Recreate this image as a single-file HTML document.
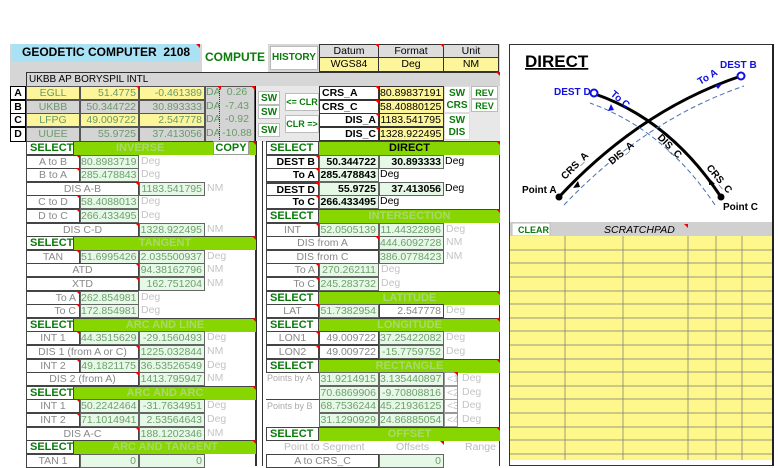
<!DOCTYPE html>
<html><head><meta charset="utf-8"><style>
*{box-sizing:border-box;margin:0;padding:0}
body{width:778px;height:466px;background:#fff;position:relative;overflow:hidden;font-family:"Liberation Sans",Arial,sans-serif;font-size:10.5px}
div{position:absolute;white-space:nowrap;overflow:hidden;line-height:13px}
.l{background:#fff;border:1px solid #444;color:#888;text-align:center}
.lr{background:#fff;border:1px solid #444;color:#888;text-align:right;padding-right:3px}
.v{background:#e6f8e6;border:1px solid #666;color:#6f9f6f;text-align:right;padding-right:2px}
.u{color:#c4c4c4;padding-left:2px}
.sel{background:#fff;border:1px solid #444;color:#0a7a0a;font-weight:bold;font-size:11px;padding-left:3px;line-height:12px}
.bar{background:#88d600;color:#a9d870;font-weight:bold;font-size:11px;text-align:center;border-top:1px solid #444;line-height:12px}
.t{width:0;height:0;border-top:4px solid #e00;border-left:4px solid transparent}
.btn{background:#fff;border:1px solid #bbb;color:#0a7a0a;font-weight:bold;font-size:10px;text-align:center}
.d{background:#fff;border:1px solid #444;color:#000;font-weight:bold;text-align:right;padding-right:3px}
.dv{background:#e6f8e6;border:1px solid #666;color:#000;font-weight:bold;text-align:right;padding-right:2px}
</style></head><body>
<!-- header -->
<div style="left:10px;top:44px;width:490px;height:98px;background:#d6d6d6"></div>
<div style="left:12px;top:44px;width:188px;height:18px;background:#a9e2f5;font-weight:bold;font-size:12px;line-height:17px;padding-left:10px">GEODETIC COMPUTER&nbsp; 2108</div>
<div class="t" style="left:196px;top:44px"></div>
<div style="left:202px;top:44px;width:66px;height:28px;background:#fff;color:#0a7a0a;font-weight:bold;font-size:12px;line-height:26px;text-align:center">COMPUTE</div>
<div style="left:270px;top:46px;width:48px;height:24px;background:#fff;border:1px solid #bbb;color:#0a7a0a;font-weight:bold;font-size:10px;line-height:22px;text-align:center">HISTORY</div>
<div style="left:319px;top:44px;width:180px;height:28px;border:1px solid #333;background:#ddd"></div>
<div style="left:319px;top:44px;width:60px;height:14px;border:1px solid #333;text-align:center;background:#ddd">Datum</div>
<div style="left:378px;top:44px;width:66px;height:14px;border:1px solid #333;text-align:center;background:#ddd">Format</div>
<div style="left:443px;top:44px;width:56px;height:14px;border:1px solid #333;text-align:center;background:#ddd">Unit</div>
<div style="left:319px;top:57px;width:60px;height:15px;border:1px solid #333;text-align:center;background:#fdf59a">WGS84</div>
<div style="left:378px;top:57px;width:66px;height:15px;border:1px solid #333;text-align:center;background:#fdf59a">Deg</div>
<div style="left:443px;top:57px;width:56px;height:15px;border:1px solid #333;text-align:center;background:#fdf59a">NM</div>
<div style="left:26px;top:72px;width:474px;height:14px;border-top:1px solid #333;border-left:1px solid #333;padding-left:2px;font-size:10px">UKBB AP BORYSPIL INTL</div>
<!-- ABCD -->
<div style="left:10px;top:86px;width:246px;height:56px;border:1px solid #000"></div>
<div style="left:10px;top:86px;width:16px;height:14px;background:#fff;border:1px solid #000;font-weight:bold;text-align:center">A</div>
<div style="left:10px;top:100px;width:16px;height:14px;background:#fff;border:1px solid #000;font-weight:bold;text-align:center">B</div>
<div style="left:10px;top:113px;width:16px;height:14px;background:#fff;border:1px solid #000;font-weight:bold;text-align:center">C</div>
<div style="left:10px;top:127px;width:16px;height:15px;background:#fff;border:1px solid #000;font-weight:bold;text-align:center">D</div>

<div style="left:26px;top:86px;width:54px;height:14px;background:#fdf59a;border:1px solid #555;color:#6a9a6a;text-align:center">EGLL</div>
<div style="left:80px;top:86px;width:59px;height:14px;background:#fdf59a;border:1px solid #555;color:#6a9a6a;text-align:right;padding-right:2px">51.4775</div>
<div style="left:139px;top:86px;width:66px;height:14px;background:#fdf59a;border:1px solid #555;color:#6a9a6a;text-align:right;padding-right:2px">-0.461389</div>
<div style="left:26px;top:100px;width:54px;height:14px;background:#d4d4d4;border:1px solid #555;color:#6a9a6a;text-align:center">UKBB</div>
<div style="left:80px;top:100px;width:59px;height:14px;background:#d4d4d4;border:1px solid #555;color:#6a9a6a;text-align:right;padding-right:2px">50.344722</div>
<div style="left:139px;top:100px;width:66px;height:14px;background:#d4d4d4;border:1px solid #555;color:#6a9a6a;text-align:right;padding-right:2px">30.893333</div>
<div style="left:26px;top:113px;width:54px;height:14px;background:#fdf59a;border:1px solid #555;color:#6a9a6a;text-align:center">LFPG</div>
<div style="left:80px;top:113px;width:59px;height:14px;background:#fdf59a;border:1px solid #555;color:#6a9a6a;text-align:right;padding-right:2px">49.009722</div>
<div style="left:139px;top:113px;width:66px;height:14px;background:#fdf59a;border:1px solid #555;color:#6a9a6a;text-align:right;padding-right:2px">2.547778</div>
<div style="left:26px;top:127px;width:54px;height:15px;background:#d4d4d4;border:1px solid #555;color:#6a9a6a;text-align:center">UUEE</div>
<div style="left:80px;top:127px;width:59px;height:15px;background:#d4d4d4;border:1px solid #555;color:#6a9a6a;text-align:right;padding-right:2px">55.9725</div>
<div style="left:139px;top:127px;width:66px;height:15px;background:#d4d4d4;border:1px solid #555;color:#6a9a6a;text-align:right;padding-right:2px">37.413056</div>
<div style="left:205px;top:86px;width:50px;height:56px;background:#d4d4d4;color:#6a9a6a;border:1px solid #555"></div>
<div style="left:206px;top:86px;width:14px;height:14px;color:#6a9a6a">DA:</div><div style="left:220px;top:86px;width:34px;height:14px;color:#6a9a6a;text-align:center">0.26</div>
<div style="left:206px;top:100px;width:14px;height:14px;color:#6a9a6a">DA:</div><div style="left:220px;top:100px;width:34px;height:14px;color:#6a9a6a;text-align:center">-7.43</div>
<div style="left:206px;top:113px;width:14px;height:14px;color:#6a9a6a">DA:</div><div style="left:220px;top:113px;width:34px;height:14px;color:#6a9a6a;text-align:center">-0.92</div>
<div style="left:206px;top:127px;width:14px;height:14px;color:#6a9a6a">DA:</div><div style="left:220px;top:127px;width:34px;height:14px;color:#6a9a6a;text-align:center">-10.88</div>
<div style="left:219px;top:86px;width:0;height:56px;border-left:1px dotted #333"></div>
<div class="t" style="left:136px;top:86px"></div><div class="t" style="left:217px;top:86px"></div><div class="t" style="left:251px;top:86px"></div>

<!-- SW / CLR -->
<div style="left:256px;top:86px;width:244px;height:55px;background:#e8e8e8"></div>
<div class="btn" style="left:258px;top:91px;width:22px;height:14px">SW</div>
<div class="btn" style="left:258px;top:105px;width:22px;height:14px">SW</div>
<div class="btn" style="left:258px;top:123px;width:22px;height:14px">SW</div>
<div class="btn" style="left:285px;top:93px;width:34px;height:18px;line-height:16px;font-size:9px">&lt;= CLR</div>
<div class="btn" style="left:285px;top:115px;width:34px;height:18px;line-height:16px;font-size:9px">CLR =&gt;</div>
<div style="left:319px;top:86px;width:60px;height:14px;background:#fff;border:1px solid #333;font-weight:bold;padding-left:2px">CRS_A</div>
<div style="left:319px;top:100px;width:60px;height:14px;background:#fff;border:1px solid #333;font-weight:bold;padding-left:2px">CRS_C</div>
<div style="left:319px;top:113px;width:60px;height:14px;background:#fff;border:1px solid #333;font-weight:bold;text-align:right;padding-right:2px">DIS_A</div>
<div style="left:319px;top:127px;width:60px;height:14px;background:#fff;border:1px solid #333;font-weight:bold;text-align:right;padding-right:2px">DIS_C</div>
<div style="left:379px;top:86px;width:65px;height:14px;background:#fdf59a;border:1px solid #333;text-align:right;padding-right:2px">80.89837191</div>
<div style="left:379px;top:100px;width:65px;height:14px;background:#fdf59a;border:1px solid #333;text-align:right;padding-right:2px">58.40880125</div>
<div style="left:379px;top:113px;width:65px;height:14px;background:#fdf59a;border:1px solid #333;text-align:right;padding-right:2px">1183.541795</div>
<div style="left:379px;top:127px;width:65px;height:14px;background:#fdf59a;border:1px solid #333;text-align:right;padding-right:2px">1328.922495</div>
<div class="btn" style="left:444px;top:86px;width:26px;height:27px;line-height:12px;padding-top:1px;border-color:#ddd">SW<br>CRS</div>
<div class="btn" style="left:444px;top:113px;width:26px;height:27px;line-height:12px;padding-top:1px;border-color:#ddd">SW<br>DIS</div>
<div class="btn" style="left:471px;top:86px;width:27px;height:13px;font-size:9px;line-height:12px">REV</div>
<div class="btn" style="left:471px;top:99px;width:27px;height:13px;font-size:9px;line-height:12px">REV</div>

<!-- left panel -->
<div style="left:26px;top:141px;width:230px;height:325px;border-left:1px solid #333;border-right:1px solid #333"></div>
<div class="sel" style="left:26px;top:141px;width:48px;height:14px">SELECT</div>
<div class="bar" style="left:74px;top:141px;width:182px;height:14px;text-align:left;padding-left:42px">INVERSE</div>
<div class="btn" style="left:213px;top:141px;width:36px;height:14px;font-size:11px;line-height:12px;border-color:#999">COPY</div>
<div class="l" style="left:26px;top:155px;width:54px;height:14px">A to B</div><div class="v" style="left:80px;top:155px;width:59px;height:14px">80.8983719</div><div class="u" style="left:139px;top:155px;width:40px;height:14px">Deg</div>
<div class="l" style="left:26px;top:168px;width:54px;height:14px">B to A</div><div class="v" style="left:80px;top:168px;width:59px;height:14px">285.478843</div><div class="u" style="left:139px;top:168px;width:40px;height:14px">Deg</div>
<div class="l" style="left:26px;top:182px;width:113px;height:14px">DIS A-B</div><div class="v" style="left:139px;top:182px;width:66px;height:14px">1183.541795</div><div class="u" style="left:205px;top:182px;width:40px;height:14px">NM</div>
<div class="l" style="left:26px;top:195px;width:54px;height:14px">C to D</div><div class="v" style="left:80px;top:195px;width:59px;height:14px">58.4088013</div><div class="u" style="left:139px;top:195px;width:40px;height:14px">Deg</div>
<div class="l" style="left:26px;top:209px;width:54px;height:14px">D to C</div><div class="v" style="left:80px;top:209px;width:59px;height:14px">266.433495</div><div class="u" style="left:139px;top:209px;width:40px;height:14px">Deg</div>
<div class="l" style="left:26px;top:223px;width:113px;height:14px">DIS C-D</div><div class="v" style="left:139px;top:223px;width:66px;height:14px">1328.922495</div><div class="u" style="left:205px;top:223px;width:40px;height:14px">NM</div>
<div class="sel" style="left:26px;top:236px;width:48px;height:14px">SELECT</div><div class="bar" style="left:74px;top:236px;width:182px;height:14px">TANGENT</div>
<div class="l" style="left:26px;top:250px;width:54px;height:14px">TAN</div><div class="v" style="left:80px;top:250px;width:59px;height:14px">51.6995426</div><div class="v" style="left:139px;top:250px;width:66px;height:14px">2.035500937</div><div class="u" style="left:205px;top:250px;width:40px;height:14px">Deg</div>
<div class="l" style="left:26px;top:263px;width:113px;height:14px">ATD</div><div class="v" style="left:139px;top:263px;width:66px;height:14px">94.38162796</div><div class="u" style="left:205px;top:263px;width:40px;height:14px">NM</div>
<div class="l" style="left:26px;top:277px;width:113px;height:14px">XTD</div><div class="v" style="left:139px;top:277px;width:66px;height:14px">162.751204</div><div class="u" style="left:205px;top:277px;width:40px;height:14px">NM</div>
<div class="lr" style="left:26px;top:291px;width:54px;height:14px">To A</div><div class="v" style="left:80px;top:291px;width:59px;height:14px">262.854981</div><div class="u" style="left:139px;top:291px;width:40px;height:14px">Deg</div>
<div class="lr" style="left:26px;top:304px;width:54px;height:14px">To C</div><div class="v" style="left:80px;top:304px;width:59px;height:14px">172.854981</div><div class="u" style="left:139px;top:304px;width:40px;height:14px">Deg</div>
<div class="sel" style="left:26px;top:318px;width:48px;height:14px">SELECT</div><div class="bar" style="left:74px;top:318px;width:182px;height:14px">ARC AND LINE</div>
<div class="l" style="left:26px;top:331px;width:54px;height:14px">INT 1</div><div class="v" style="left:80px;top:331px;width:59px;height:14px">44.3515629</div><div class="v" style="left:139px;top:331px;width:66px;height:14px">-29.1560493</div><div class="u" style="left:205px;top:331px;width:40px;height:14px">Deg</div>
<div class="l" style="left:26px;top:345px;width:113px;height:14px">DIS 1 (from A or C)</div><div class="v" style="left:139px;top:345px;width:66px;height:14px">1225.032844</div><div class="u" style="left:205px;top:345px;width:40px;height:14px">NM</div>
<div class="l" style="left:26px;top:359px;width:54px;height:14px">INT 2</div><div class="v" style="left:80px;top:359px;width:59px;height:14px">49.1821175</div><div class="v" style="left:139px;top:359px;width:66px;height:14px">36.53526549</div><div class="u" style="left:205px;top:359px;width:40px;height:14px">Deg</div>
<div class="l" style="left:26px;top:372px;width:113px;height:14px">DIS 2 (from A)</div><div class="v" style="left:139px;top:372px;width:66px;height:14px">1413.795947</div><div class="u" style="left:205px;top:372px;width:40px;height:14px">NM</div>
<div class="sel" style="left:26px;top:386px;width:48px;height:14px">SELECT</div><div class="bar" style="left:74px;top:386px;width:182px;height:14px">ARC AND ARC</div>
<div class="l" style="left:26px;top:399px;width:54px;height:14px">INT 1</div><div class="v" style="left:80px;top:399px;width:59px;height:14px">50.2242464</div><div class="v" style="left:139px;top:399px;width:66px;height:14px">-31.7634951</div><div class="u" style="left:205px;top:399px;width:40px;height:14px">Deg</div>
<div class="l" style="left:26px;top:413px;width:54px;height:14px">INT 2</div><div class="v" style="left:80px;top:413px;width:59px;height:14px">71.1014941</div><div class="v" style="left:139px;top:413px;width:66px;height:14px">2.53564643</div><div class="u" style="left:205px;top:413px;width:40px;height:14px">Deg</div>
<div class="l" style="left:26px;top:427px;width:113px;height:14px">DIS A-C</div><div class="v" style="left:139px;top:427px;width:66px;height:14px">188.1202346</div><div class="u" style="left:205px;top:427px;width:40px;height:14px">NM</div>
<div class="sel" style="left:26px;top:440px;width:48px;height:14px">SELECT</div><div class="bar" style="left:74px;top:440px;width:182px;height:14px">ARC AND TANGENT</div>
<div class="l" style="left:26px;top:454px;width:54px;height:14px">TAN 1</div><div class="v" style="left:80px;top:454px;width:59px;height:14px">0</div><div class="v" style="left:139px;top:454px;width:66px;height:14px">0</div>

<!-- right panel -->
<div style="left:256px;top:141px;width:7px;height:325px;border-left:1px solid #333;border-right:1px solid #333;background:#fff"></div>
<div style="left:263px;top:141px;width:237px;height:325px;border-right:1px solid #333"></div>
<div class="sel" style="left:266px;top:141px;width:53px;height:14px">SELECT</div><div class="bar" style="left:319px;top:141px;width:181px;height:14px;color:#000">DIRECT</div>
<div class="d" style="left:266px;top:155px;width:53px;height:14px">DEST B</div><div class="dv" style="left:319px;top:155px;width:60px;height:14px">50.344722</div><div class="dv" style="left:379px;top:155px;width:65px;height:14px">30.893333</div><div style="left:445px;top:155px;width:40px;height:14px">Deg</div>
<div class="d" style="left:266px;top:168px;width:53px;height:14px">To A</div><div class="dv" style="left:319px;top:168px;width:60px;height:14px">285.478843</div><div style="left:380px;top:168px;width:40px;height:14px">Deg</div>
<div class="d" style="left:266px;top:182px;width:53px;height:14px;border-top:2px solid #444">DEST D</div><div class="dv" style="left:319px;top:182px;width:60px;height:14px">55.9725</div><div class="dv" style="left:379px;top:182px;width:65px;height:14px">37.413056</div><div style="left:445px;top:182px;width:40px;height:14px">Deg</div>
<div class="d" style="left:266px;top:195px;width:53px;height:14px">To C</div><div class="dv" style="left:319px;top:195px;width:60px;height:14px">266.433495</div><div style="left:380px;top:195px;width:40px;height:14px">Deg</div>
<div class="sel" style="left:266px;top:209px;width:53px;height:14px">SELECT</div><div class="bar" style="left:319px;top:209px;width:181px;height:14px">INTERSECTION</div>
<div class="l" style="left:266px;top:223px;width:53px;height:14px">INT</div><div class="v" style="left:319px;top:223px;width:60px;height:14px">52.0505139</div><div class="v" style="left:379px;top:223px;width:65px;height:14px">11.44322896</div><div class="u" style="left:444px;top:223px;width:40px;height:14px">Deg</div>
<div class="l" style="left:266px;top:236px;width:113px;height:14px">DIS from A</div><div class="v" style="left:379px;top:236px;width:65px;height:14px">444.6092728</div><div class="u" style="left:444px;top:236px;width:40px;height:14px">NM</div>
<div class="l" style="left:266px;top:250px;width:113px;height:14px">DIS from C</div><div class="v" style="left:379px;top:250px;width:65px;height:14px">386.0778423</div><div class="u" style="left:444px;top:250px;width:40px;height:14px">NM</div>
<div class="lr" style="left:266px;top:263px;width:53px;height:14px">To A</div><div class="v" style="left:319px;top:263px;width:60px;height:14px">270.262111</div><div class="u" style="left:379px;top:263px;width:40px;height:14px">Deg</div>
<div class="lr" style="left:266px;top:277px;width:53px;height:14px">To C</div><div class="v" style="left:319px;top:277px;width:60px;height:14px">245.283732</div><div class="u" style="left:379px;top:277px;width:40px;height:14px">Deg</div>
<div class="sel" style="left:266px;top:291px;width:53px;height:14px">SELECT</div><div class="bar" style="left:319px;top:291px;width:181px;height:14px">LATITUDE</div>
<div class="l" style="left:266px;top:304px;width:53px;height:14px">LAT</div><div class="v" style="left:319px;top:304px;width:60px;height:14px">51.7382954</div><div class="lr" style="left:379px;top:304px;width:65px;height:14px;padding-right:2px">2.547778</div><div class="u" style="left:444px;top:304px;width:40px;height:14px">Deg</div>
<div class="sel" style="left:266px;top:318px;width:53px;height:14px">SELECT</div><div class="bar" style="left:319px;top:318px;width:181px;height:14px">LONGITUDE</div>
<div class="l" style="left:266px;top:331px;width:53px;height:14px">LON1</div><div class="lr" style="left:319px;top:331px;width:60px;height:14px;padding-right:2px">49.009722</div><div class="v" style="left:379px;top:331px;width:65px;height:14px">37.25422082</div><div class="u" style="left:444px;top:331px;width:40px;height:14px">Deg</div>
<div class="l" style="left:266px;top:345px;width:53px;height:14px">LON2</div><div class="lr" style="left:319px;top:345px;width:60px;height:14px;padding-right:2px">49.009722</div><div class="v" style="left:379px;top:345px;width:65px;height:14px">-15.7759752</div><div class="u" style="left:444px;top:345px;width:40px;height:14px">Deg</div>
<div class="sel" style="left:266px;top:359px;width:53px;height:14px">SELECT</div><div class="bar" style="left:319px;top:359px;width:181px;height:14px">RECTANGLE</div>
<div style="left:266px;top:372px;width:53px;height:27px;color:#aaa;font-size:9px;padding-left:1px">Points by A</div>
<div style="left:266px;top:399px;width:53px;height:28px;color:#aaa;font-size:9px;padding-left:1px;border-top:1px solid #444">Points by B</div>
<div class="v" style="left:319px;top:372px;width:60px;height:14px">31.9214915</div><div class="v" style="left:379px;top:372px;width:65px;height:14px">3.135440897</div><div class="u" style="left:444px;top:372px;width:14px;height:14px;border:1px solid #999">&lt;1</div><div class="u" style="left:460px;top:372px;width:30px;height:14px">Deg</div>
<div class="v" style="left:319px;top:386px;width:60px;height:14px">70.6869906</div><div class="v" style="left:379px;top:386px;width:65px;height:14px">-9.70808816</div><div class="u" style="left:444px;top:386px;width:14px;height:14px;border:1px solid #999">&lt;2</div><div class="u" style="left:460px;top:386px;width:30px;height:14px">Deg</div>
<div class="v" style="left:319px;top:399px;width:60px;height:14px">68.7536244</div><div class="v" style="left:379px;top:399px;width:65px;height:14px">45.21936125</div><div class="u" style="left:444px;top:399px;width:14px;height:14px;border:1px solid #999">&lt;3</div><div class="u" style="left:460px;top:399px;width:30px;height:14px">Deg</div>
<div class="v" style="left:319px;top:413px;width:60px;height:14px">31.1290929</div><div class="v" style="left:379px;top:413px;width:65px;height:14px">24.86885054</div><div class="u" style="left:444px;top:413px;width:14px;height:14px;border:1px solid #999">&lt;4</div><div class="u" style="left:460px;top:413px;width:30px;height:14px">Deg</div>
<div class="sel" style="left:266px;top:427px;width:53px;height:14px">SELECT</div><div class="bar" style="left:319px;top:427px;width:181px;height:14px">OFFSET</div>
<div style="left:266px;top:441px;width:234px;height:13px;color:#bbb"><span style="position:absolute;left:18px">Point to Segment</span><span style="position:absolute;left:130px">Offsets</span><span style="position:absolute;left:199px">Range</span></div>
<div class="l" style="left:266px;top:454px;width:113px;height:14px">A to CRS_C</div><div class="v" style="left:379px;top:454px;width:65px;height:14px">0</div>

<!-- red triangles -->
<div class="t" style="left:252px;top:141px"></div><div class="t" style="left:76px;top:155px"></div><div class="t" style="left:76px;top:168px"></div><div class="t" style="left:135px;top:182px"></div><div class="t" style="left:76px;top:195px"></div><div class="t" style="left:76px;top:209px"></div><div class="t" style="left:135px;top:223px"></div><div class="t" style="left:252px;top:236px"></div><div class="t" style="left:76px;top:250px"></div><div class="t" style="left:135px;top:263px"></div><div class="t" style="left:135px;top:277px"></div><div class="t" style="left:76px;top:291px"></div><div class="t" style="left:76px;top:304px"></div><div class="t" style="left:252px;top:318px"></div><div class="t" style="left:76px;top:331px"></div><div class="t" style="left:135px;top:345px"></div><div class="t" style="left:76px;top:359px"></div><div class="t" style="left:135px;top:372px"></div><div class="t" style="left:252px;top:386px"></div><div class="t" style="left:76px;top:399px"></div><div class="t" style="left:76px;top:413px"></div><div class="t" style="left:135px;top:427px"></div><div class="t" style="left:252px;top:440px"></div>
<div class="t" style="left:496px;top:141px"></div><div class="t" style="left:315px;top:155px"></div><div class="t" style="left:315px;top:168px"></div><div class="t" style="left:315px;top:182px"></div><div class="t" style="left:315px;top:195px"></div><div class="t" style="left:496px;top:209px"></div><div class="t" style="left:315px;top:223px"></div><div class="t" style="left:375px;top:236px"></div><div class="t" style="left:315px;top:263px"></div><div class="t" style="left:315px;top:277px"></div><div class="t" style="left:496px;top:291px"></div><div class="t" style="left:315px;top:304px"></div><div class="t" style="left:496px;top:318px"></div><div class="t" style="left:315px;top:331px"></div><div class="t" style="left:315px;top:345px"></div><div class="t" style="left:496px;top:359px"></div><div class="t" style="left:454px;top:372px"></div><div class="t" style="left:496px;top:427px"></div><div class="t" style="left:440px;top:441px"></div><div class="t" style="left:375px;top:86px"></div><div class="t" style="left:375px;top:100px"></div><div class="t" style="left:375px;top:113px"></div><div class="t" style="left:375px;top:127px"></div><div class="t" style="left:496px;top:72px"></div><div class="t" style="left:375px;top:44px"></div><div class="t" style="left:440px;top:44px"></div>

<!-- diagram -->
<div style="left:509px;top:44px;width:264px;height:422px;border:1px solid #333;background:#fff"></div>
<svg style="position:absolute;left:0;top:0" width="778" height="466">
<text x="525" y="67" font-family="Liberation Sans" font-weight="bold" font-size="17" text-decoration="underline">DIRECT</text>
<path d="M559,197 Q640,110 741,76" fill="none" stroke="#000" stroke-width="3"/>
<path d="M721,197 Q670,120 595,94" fill="none" stroke="#000" stroke-width="3"/>
<path d="M564,205 Q645,120 744,86" fill="none" stroke="#4a6fb0" stroke-width="1" stroke-dasharray="5,3"/>
<path d="M715,205 Q665,130 590,103" fill="none" stroke="#4a6fb0" stroke-width="1" stroke-dasharray="5,3"/>
<circle cx="559" cy="197" r="3.5"/><circle cx="721" cy="197" r="3.5"/>
<circle cx="741" cy="76" r="3.5" fill="#fff" stroke="#1010e0" stroke-width="2"/>
<circle cx="594" cy="93" r="3.5" fill="#fff" stroke="#1010e0" stroke-width="2"/>
<path d="M573,188 l5,-7 l2,6z M715,184 l-6,-6 l0,7z" fill="#000"/>
<path d="M722,84 l-7,1 l3,4z M611,104 l-3,7 l6,-1z" fill="#1010e0"/>
<g font-family="Liberation Sans" font-weight="bold" font-size="10">
<text x="522" y="193">Point A</text><text x="723" y="210">Point C</text>
<text x="720" y="68" fill="#1010e0">DEST B</text><text x="554" y="95" fill="#1010e0">DEST D</text>
<text x="700" y="85" fill="#1010e0" transform="rotate(-30 700 85)">To A</text>
<text x="610" y="95" fill="#1010e0" transform="rotate(40 610 95)">To C</text>
<text x="565" y="180" transform="rotate(-45 565 180)">CRS_A</text>
<text x="612" y="165" transform="rotate(-40 612 165)">DIS_A</text>
<text x="657" y="138" transform="rotate(45 657 138)">DIS_C</text>
<text x="706" y="168" transform="rotate(50 706 168)">CRS_C</text>
</g>
<rect x="510" y="222" width="262" height="14" fill="#d0d0d0"/>
<rect x="512" y="223" width="38" height="13" fill="#fff" stroke="#bbb"/>
<text x="518" y="233" font-family="Liberation Sans" font-weight="bold" font-size="9" fill="#0a7a0a">CLEAR</text>
<text x="604" y="233" font-family="Liberation Sans" font-style="italic" font-size="10.5">SCRATCHPAD</text>
<path d="M684,224 l4,0 l0,4z" fill="#e00"/>
<rect x="510" y="236" width="262" height="224" fill="#fdf78c"/>
<g stroke="#777" stroke-width="0.7">
<line x1="565" y1="236" x2="565" y2="460"/><line x1="623" y1="236" x2="623" y2="460"/><line x1="688" y1="236" x2="688" y2="460"/><line x1="716" y1="236" x2="716" y2="460"/><line x1="742" y1="236" x2="742" y2="460"/>
<line x1="510" y1="250" x2="772" y2="250"/><line x1="510" y1="263" x2="772" y2="263"/><line x1="510" y1="277" x2="772" y2="277"/><line x1="510" y1="291" x2="772" y2="291"/><line x1="510" y1="304" x2="772" y2="304"/><line x1="510" y1="318" x2="772" y2="318"/><line x1="510" y1="331" x2="772" y2="331"/><line x1="510" y1="345" x2="772" y2="345"/><line x1="510" y1="359" x2="772" y2="359"/><line x1="510" y1="372" x2="772" y2="372"/><line x1="510" y1="386" x2="772" y2="386"/><line x1="510" y1="399" x2="772" y2="399"/><line x1="510" y1="413" x2="772" y2="413"/><line x1="510" y1="427" x2="772" y2="427"/><line x1="510" y1="440" x2="772" y2="440"/><line x1="510" y1="454" x2="772" y2="454"/>
</g>
<line x1="773" y1="44" x2="773" y2="466" stroke="#222" stroke-width="2"/>
</svg>
</body></html>
